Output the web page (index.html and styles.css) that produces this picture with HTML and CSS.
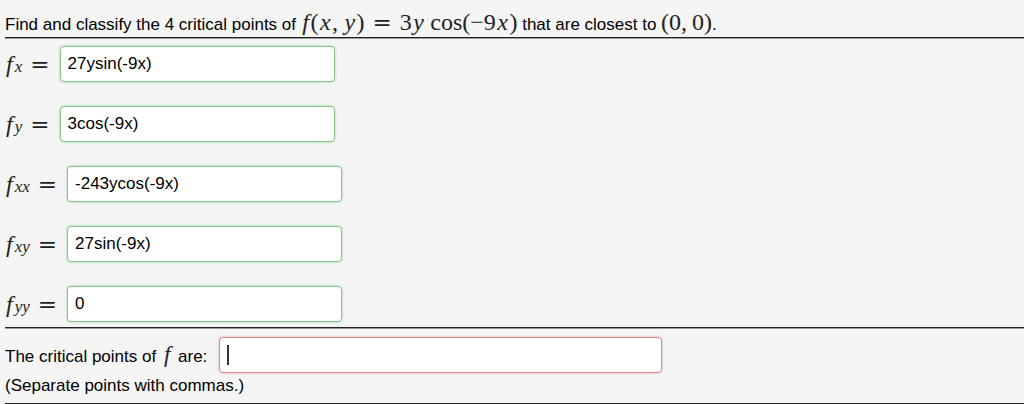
FILE: index.html
```html
<html>
  <head>
    <meta http-equiv="content-type" content="text/html; charset=utf-8" />
    <link rel="stylesheet" href="styles.css">
  </head>
  <body>
    <div class="problem">
      <div class="prompt">
        Find and classify the 4 critical points of
        <span class="math"><i>f</i>(<i>x</i>,&thinsp;<i>y</i>)<span class="op">=</span>3<i>y</i>&thinsp;cos(−9<i>x</i>)</span>
        that are closest to <span class="math">(0,&thinsp;0)</span>.
      </div>
      <div class="rule"></div>
      <div class="parts">
        <div class="part">
          <span class="math label"><i>f</i><sub><i>x</i></sub><span class="op">=</span></span>
          <div class="answer ok">27ysin(-9x)</div>
        </div>
        <div class="part">
          <span class="math label"><i>f</i><sub><i>y</i></sub><span class="op">=</span></span>
          <div class="answer ok">3cos(-9x)</div>
        </div>
        <div class="part">
          <span class="math label"><i>f</i><sub><i>xx</i></sub><span class="op">=</span></span>
          <div class="answer ok">-243ycos(-9x)</div>
        </div>
        <div class="part">
          <span class="math label"><i>f</i><sub><i>xy</i></sub><span class="op">=</span></span>
          <div class="answer ok">27sin(-9x)</div>
        </div>
        <div class="part">
          <span class="math label"><i>f</i><sub><i>yy</i></sub><span class="op">=</span></span>
          <div class="answer ok">0</div>
        </div>
      </div>
      <div class="rule"></div>
      <div class="final">
        <div class="final-row">
          <span>The critical points of <span class="math"><i>f</i></span> are:</span>
          <div class="answer bad wide"><span class="caret"></span></div>
        </div>
        <div class="hint">(Separate points with commas.)</div>
      </div>
      <div class="rule"></div>
    </div>
  </body>
</html>
```

FILE: styles.css
```css
body {
  margin: 0;
  padding: 0;
  background: #f5f5f5;
  font-family: "Liberation Sans", Arial, sans-serif;
  font-size: 17px;
  color: #000;
}
.problem {
  padding-left: 5px;
}
.prompt {
  height: 37px;
  line-height: 44px;
  white-space: nowrap;
}
.math {
  font-family: "Liberation Serif", "DejaVu Serif", serif;
  font-size: 24px;
  color: #222;
}
.math i {
  font-style: italic;
  margin: 0 1.5px;
}
.op {
  font-family: "DejaVu Serif", serif;
  font-size: 23px;
  margin: 0 8px;
}
.rule {
  height: 1px;
  background: #222;
  border-bottom: 1px solid #9a9a9a;
}
.parts {
  display: flex;
  flex-direction: column;
  gap: 24px;
  padding: 7px 0 5px;
}
.part {
  display: flex;
  align-items: center;
  height: 36px;
}
.label {
  display: flex;
  align-items: baseline;
  margin-right: 3px;
}
.label i {
  margin: 0 1px;
}
.label .op {
  margin: 0 7px;
}
.label sub {
  font-size: 17px;
  vertical-align: -5px;
  line-height: 0;
}
.answer {
  box-sizing: border-box;
  width: 275px;
  height: 36px;
  background: #fff;
  border-radius: 4px;
  padding: 0 7px;
  display: flex;
  align-items: center;
  font-size: 17px;
  color: #000;
}
.ok {
  border: 1px solid #88c488;
  box-shadow: 0 0 3px #a3d5a3;
}
.bad {
  border: 1px solid #d98a8a;
  box-shadow: 0 0 3px #e8b0b0;
}
.wide {
  width: 443px;
}
.caret {
  display: inline-block;
  width: 2px;
  height: 20px;
  background: #333;
}
.final {
  padding-top: 8px;
}
.final-row {
  display: flex;
  align-items: center;
  gap: 12px;
}
.final-row .math {
  font-size: 23px;
}
.final-row .math i {
  margin: 0 3px;
}
.hint {
  height: 30px;
  line-height: 26px;
}
```
